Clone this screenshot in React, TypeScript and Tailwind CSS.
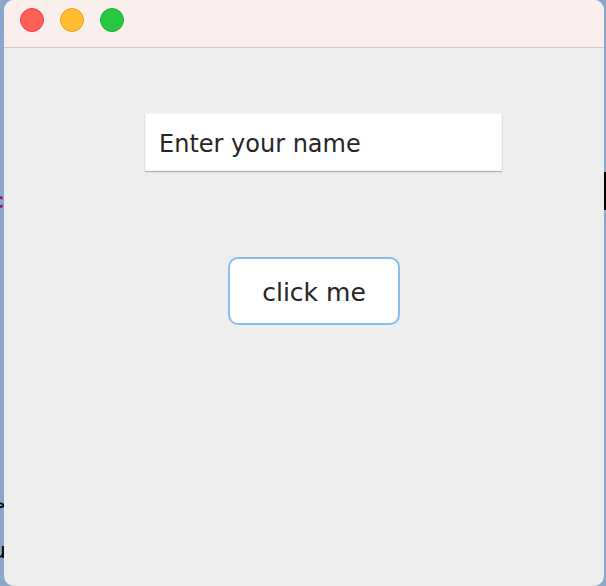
import React, { useState } from 'react';

function TrafficLight({ color, ring }: { color: string; ring: string }) {
  return <span className={`w-[24px] h-[24px] rounded-full border ${color} ${ring}`} />;
}

export default function App() {
  const [name, setName] = useState('');

  return (
    <div className="relative w-[606px] h-[586px] bg-[#8ba7cb] flex overflow-hidden font-['DejaVu_Sans',sans-serif]">
      {/* bits of the desktop peeking out on the left */}
      <div className="relative w-[4px] h-full overflow-hidden text-black text-[22px] leading-none">
        <span className="absolute left-[-9px] top-[8px] text-[26px]">(</span>
        <span className="absolute left-[-9px] top-[190px] text-[#8a1a5c] font-bold">c</span>
        <span className="absolute left-[-6px] top-[280px] text-[18px]">:</span>
        <span className="absolute left-[-10px] top-[494px]">&gt;</span>
        <span className="absolute left-[-8px] top-[540px]">u</span>
      </div>

      {/* window */}
      <div className="w-[600px] h-full rounded-[10px] overflow-hidden bg-[#eeeeee] flex flex-col">
        <div className="h-[48px] shrink-0 bg-[#fbefee] border-b border-[#c9c9c9] flex items-center gap-[16px] pl-[16px] pb-[8px]">
          <TrafficLight color="bg-[#fe5f57]" ring="border-[#e2463f]" />
          <TrafficLight color="bg-[#febc2e]" ring="border-[#e0a125]" />
          <TrafficLight color="bg-[#28c840]" ring="border-[#1eac2c]" />
        </div>

        <div className="flex flex-col items-start">
          <input
            value={name}
            onChange={(e) => setName(e.target.value)}
            placeholder="Enter your name"
            className="mt-[65px] ml-[141px] w-[357px] h-[58px] bg-white px-[13px] pt-[4px] text-[24px] text-[#262626] placeholder:text-[#262626] outline-none border border-[#f4f4f4] shadow-[0_1px_1px_rgba(0,0,0,0.25)]"
          />
          <button className="mt-[86px] ml-[224px] w-[172px] h-[68px] bg-white rounded-[10px] border-2 border-[#86bdf3] pt-[4px] text-[25px] text-[#262626]">
            click me
          </button>
        </div>
      </div>

      <div className="w-[2px] h-full relative">
        <span className="absolute left-0 top-[172px] w-[2px] h-[38px] bg-black" />
      </div>
    </div>
  );
}
